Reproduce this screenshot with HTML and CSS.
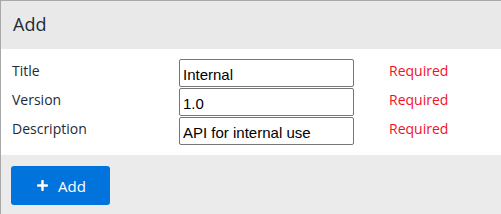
FILE: index.html
```html
<!DOCTYPE html>
<html lang="en">
<head>
    <meta charset="UTF-8">
    <title>Add</title>
    <link rel="stylesheet" href="styles.css">
</head>
<body>

<div class="panel">
    <div class="panel-header">Add</div>

    <div class="panel-body">
        <div class="form-grid">
            <label class="field-label" for="title">Title</label>
            <input class="field-input" id="title" type="text" value="Internal">
            <span class="field-error">Required</span>

            <label class="field-label" for="version">Version</label>
            <input class="field-input" id="version" type="text" value="1.0">
            <span class="field-error">Required</span>

            <label class="field-label" for="description">Description</label>
            <input class="field-input" id="description" type="text" value="API for internal use">
            <span class="field-error">Required</span>
        </div>
    </div>

    <div class="panel-footer">
        <button class="btn-add">
            <svg class="plus" width="11" height="11" viewBox="0 0 11 11">
                <path d="M5.5 1v9M1 5.5h9" stroke="#fff" stroke-width="2.4" stroke-linecap="round"/>
            </svg>
            Add
        </button>
    </div>
</div>

</body>
</html>
```

FILE: styles.css
```css
body { margin: 0; font-family: "Open Sans", "Noto Sans", sans-serif; color: #1d2a3a; background: #ebebeb; }
.panel { border-left: 1px solid #a8a8a8; border-top: 1px solid #a8a8a8; min-height: 213px; background: #ebebeb; }
.panel-header {
    height: 48px;
    padding: 0 12px;
    font-size: 18px;
    line-height: 46px;
    background: #e9e9e9;
}
.panel-body { background: #fff; padding: 10px 11px 10px 11px; }
.form-grid {
    display: grid;
    grid-template-columns: 167px 175px auto;
    row-gap: 1px;
    align-items: center;
}
.field-label { font-size: 14px; line-height: 28px; margin-top: -4px; }
.field-input {
    box-sizing: border-box;
    height: 28px;
    width: 175px;
    margin: 0;
    padding: 2px 3px 0;
    border: 1px solid #767676;
    border-radius: 2px;
    font-family: "Liberation Sans", Arial, sans-serif;
    font-size: 15px;
    color: #000;
}
.field-error { color: #f2112a; font-size: 14px; line-height: 28px; margin-top: -4px; margin-left: 35px; }
.panel-footer { padding: 11px 10px; }
.btn-add {
    display: flex;
    align-items: center;
    justify-content: center;
    gap: 10px;
    width: 99px;
    height: 39px;
    border: none;
    border-radius: 3px;
    background: #0073dd;
    color: #fff;
    font-family: "Open Sans", sans-serif;
    font-size: 15px;
    padding: 0 0 0 2px;
}
```
